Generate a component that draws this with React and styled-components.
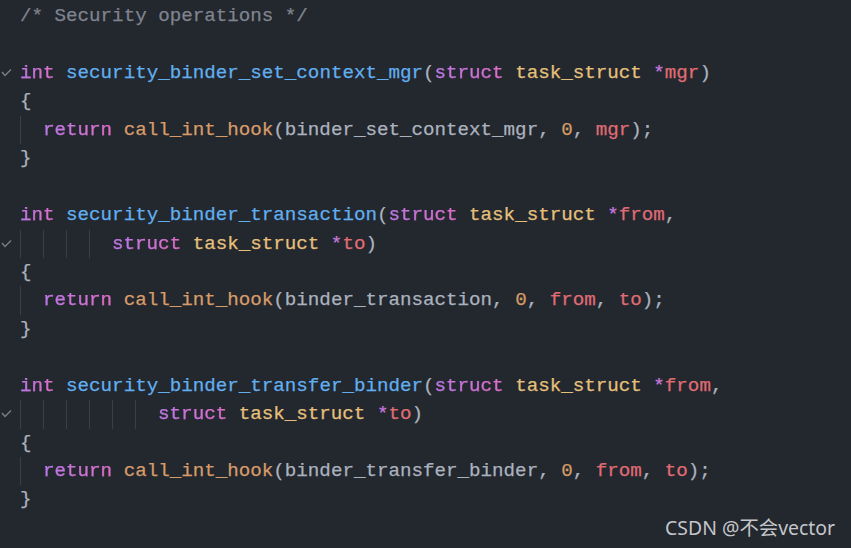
import React from 'react';
import styled, { createGlobalStyle } from 'styled-components';

const GlobalStyle = createGlobalStyle`
  html, body {
    margin: 0;
    padding: 0;
    background: #23272e;
  }
`;

const COLORS = {
  comment: '#7f848e',
  fn: '#61afef',
  type: '#e5c07b',
  param: '#e06c75',
  plain: '#abb2bf',
  macro: '#d79b6a',
  num: '#d19a66',
  op: '#c678dd'
};

const Editor = styled.div`
  position: relative;
  width: 851px;
  height: 548px;
  overflow: hidden;
  background: #23272e;
  padding-top: 2px;
  box-sizing: border-box;
  font-family: 'Liberation Mono', 'DejaVu Sans Mono', monospace;
  font-size: 19.2px;
  line-height: 28.45px;
  color: ${COLORS.plain};
`;

const Line = styled.div`
  display: flex;
  height: 28.45px;
`;

const Gutter = styled.div`
  width: 20px;
  flex: none;
  display: flex;
  align-items: center;
  padding-left: 1px;
  box-sizing: border-box;
`;

const Code = styled.div`
  white-space: pre;
  -webkit-text-stroke: 0.25px currentColor;
`;

const Token = styled.span`
  color: ${p => COLORS[p.$kind] || COLORS.plain};
`;

const Keyword = styled.span`
  background: linear-gradient(90deg, #b57ae8 0%, #e06cc0 100%);
  -webkit-background-clip: text;
  background-clip: text;
  color: transparent;
  -webkit-text-stroke: 0.25px rgba(205, 115, 220, 0.8);
`;

const Guide = styled.span`
  display: inline-block;
  width: 2ch;
  height: 28.45px;
  vertical-align: top;
  box-sizing: border-box;
  border-left: 1px solid #3a3f47;
`;

const Watermark = styled.div`
  position: absolute;
  right: 16px;
  bottom: 6px;
  font-family: 'Noto Sans', 'Noto Sans CJK SC', sans-serif;
  font-size: 19.4px;
  color: #c4c6ca;
`;

const Chevron = () => (
  <svg width="11" height="8" viewBox="0 0 11 8">
    <path d="M1 3 L4 6.5 L10 0.5" fill="none" stroke="#7a7f87" strokeWidth="1.4" />
  </svg>
);

const k = t => <Keyword>{t}</Keyword>;
const t = (kind, text) => <Token $kind={kind}>{text}</Token>;
const guides = n => Array.from({ length: n }, (_, i) => <Guide key={i} />);

const lines = [
  { code: [t('comment', '/* Security operations */')] },
  { code: [] },
  {
    fold: true,
    code: [k('int'), ' ', t('fn', 'security_binder_set_context_mgr'), '(', k('struct'), ' ',
      t('type', 'task_struct'), ' ', t('op', '*'), t('param', 'mgr'), ')']
  },
  { code: ['{'] },
  {
    code: [...guides(1), k('return'), ' ', t('macro', 'call_int_hook'), '(binder_set_context_mgr, ',
      t('num', '0'), ', ', t('param', 'mgr'), ');']
  },
  { code: ['}'] },
  { code: [] },
  {
    code: [k('int'), ' ', t('fn', 'security_binder_transaction'), '(', k('struct'), ' ',
      t('type', 'task_struct'), ' ', t('op', '*'), t('param', 'from'), ',']
  },
  {
    fold: true,
    code: [...guides(4), k('struct'), ' ', t('type', 'task_struct'), ' ', t('op', '*'), t('param', 'to'), ')']
  },
  { code: ['{'] },
  {
    code: [...guides(1), k('return'), ' ', t('macro', 'call_int_hook'), '(binder_transaction, ',
      t('num', '0'), ', ', t('param', 'from'), ', ', t('param', 'to'), ');']
  },
  { code: ['}'] },
  { code: [] },
  {
    code: [k('int'), ' ', t('fn', 'security_binder_transfer_binder'), '(', k('struct'), ' ',
      t('type', 'task_struct'), ' ', t('op', '*'), t('param', 'from'), ',']
  },
  {
    fold: true,
    code: [...guides(6), k('struct'), ' ', t('type', 'task_struct'), ' ', t('op', '*'), t('param', 'to'), ')']
  },
  { code: ['{'] },
  {
    code: [...guides(1), k('return'), ' ', t('macro', 'call_int_hook'), '(binder_transfer_binder, ',
      t('num', '0'), ', ', t('param', 'from'), ', ', t('param', 'to'), ');']
  },
  { code: ['}'] }
];

export default function App() {
  return (
    <>
      <GlobalStyle />
      <Editor>
        {lines.map((line, i) => (
          <Line key={i}>
            <Gutter>{line.fold && <Chevron />}</Gutter>
            <Code>
              {line.code.map((part, j) => (
                <React.Fragment key={j}>{part}</React.Fragment>
              ))}
            </Code>
          </Line>
        ))}
        <Watermark>CSDN @不会vector</Watermark>
      </Editor>
    </>
  );
}
